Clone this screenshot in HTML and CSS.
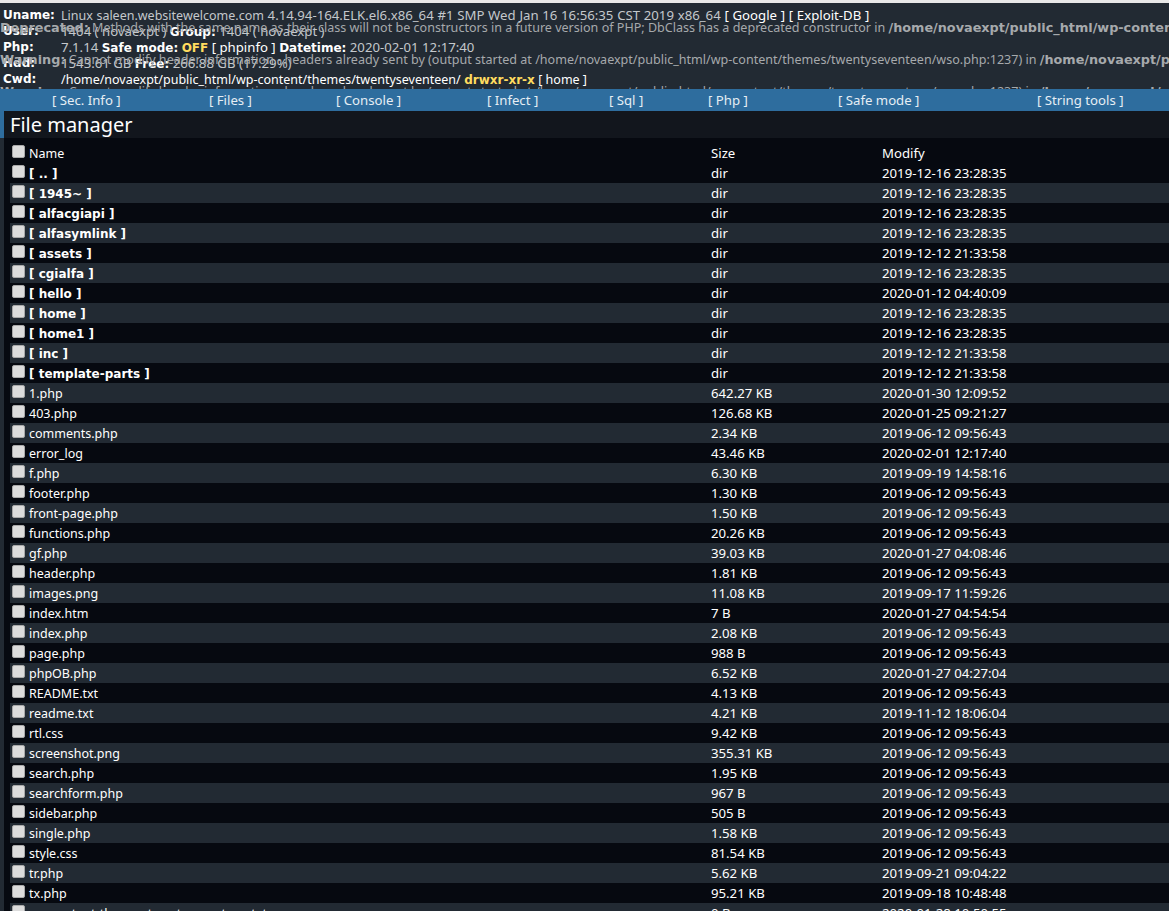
FILE: index.html
```html
<!DOCTYPE html>
<html lang="en">
<head>
<meta charset="utf-8">
<title>File manager</title>
<link rel="stylesheet" href="styles.css">
</head>
<body>
<div class="page">
<header class="head">
  <div class="info-row"><b class="label">Uname:</b><span class="val uname"><span class="txt">Linux saleen.websitewelcome.com</span> 4.14.94-164.ELK.el6.x86_64 #1 SMP Wed Jan 16 16:56:35 CST 2019 x86_64 <a>[ Google ]</a> <a>[ Exploit-DB ]</a></span></div>
  <div class="info-row"><b class="label">User:</b><span class="val">1404 ( novaexpt ) <b>Group:</b> 1404 ( novaexpt )</span></div>
  <div class="info-row"><b class="label">Php:</b><span class="val">7.1.14 <b>Safe mode:</b> <b class="warn">OFF</b> <a>[ phpinfo ]</a> <b>Datetime:</b> 2020-02-01 12:17:40</span></div>
  <div class="info-row"><b class="label">Hdd:</b><span class="val">1543.61 GB <b>Free:</b> 266.88 GB (17.29%)</span></div>
  <div class="info-row"><b class="label">Cwd:</b><span class="val"><a class="txt">/home/novaexpt/public_html/wp-content/themes/twentyseventeen/</a> <b class="warn">drwxr-xr-x</b> <a class="txt">[ home ]</a></span></div>
  <div class="notices">
    <div class="notice n1"><b>Deprecated:</b> Methods with the same name as their class will not be constructors in a future version of PHP; DbClass has a deprecated constructor in <b>/home/novaexpt/public_html/wp-content/themes/twentyseventeen/wso.php</b></div>
    <div class="notice n2"><b>Warning:</b> Cannot modify header information - headers already sent by (output started at /home/novaexpt/public_html/wp-content/themes/twentyseventeen/wso.php:1237) in <b>/home/novaexpt/public_html/wp-content/themes</b></div>
    <div class="notice n3"><b>Warning:</b> Cannot modify header information - headers already sent by (output started at /home/novaexpt/public_html/wp-content/themes/twentyseventeen/wso.php:1237) in <b>/home/novaexpt/public_html/wp-content/themes</b></div>
  </div>
</header>
<nav class="menu">
  <a>[ Sec. Info ]</a><a>[ Files ]</a><a>[ Console ]</a><a>[ Infect ]</a><a>[ Sql ]</a><a>[ Php ]</a><a>[ Safe mode ]</a><a>[ String tools ]</a>
</nav>
<main class="main">
  <h1 class="title">File manager</h1>
  <div class="files">
    <div class="row head-row"><span class="name"><i class="cb"></i>Name</span><span class="size">Size</span><span class="mod">Modify</span></div>
    <div class="row dir"><span class="name"><i class="cb"></i><b>[ .. ]</b></span><span class="size">dir</span><span class="mod">2019-12-16 23:28:35</span></div>
    <div class="row alt dir"><span class="name"><i class="cb"></i><b>[ 1945~ ]</b></span><span class="size">dir</span><span class="mod">2019-12-16 23:28:35</span></div>
    <div class="row dir"><span class="name"><i class="cb"></i><b>[ alfacgiapi ]</b></span><span class="size">dir</span><span class="mod">2019-12-16 23:28:35</span></div>
    <div class="row alt dir"><span class="name"><i class="cb"></i><b>[ alfasymlink ]</b></span><span class="size">dir</span><span class="mod">2019-12-16 23:28:35</span></div>
    <div class="row dir"><span class="name"><i class="cb"></i><b>[ assets ]</b></span><span class="size">dir</span><span class="mod">2019-12-12 21:33:58</span></div>
    <div class="row alt dir"><span class="name"><i class="cb"></i><b>[ cgialfa ]</b></span><span class="size">dir</span><span class="mod">2019-12-16 23:28:35</span></div>
    <div class="row dir"><span class="name"><i class="cb"></i><b>[ hello ]</b></span><span class="size">dir</span><span class="mod">2020-01-12 04:40:09</span></div>
    <div class="row alt dir"><span class="name"><i class="cb"></i><b>[ home ]</b></span><span class="size">dir</span><span class="mod">2019-12-16 23:28:35</span></div>
    <div class="row dir"><span class="name"><i class="cb"></i><b>[ home1 ]</b></span><span class="size">dir</span><span class="mod">2019-12-16 23:28:35</span></div>
    <div class="row alt dir"><span class="name"><i class="cb"></i><b>[ inc ]</b></span><span class="size">dir</span><span class="mod">2019-12-12 21:33:58</span></div>
    <div class="row dir"><span class="name"><i class="cb"></i><b>[ template-parts ]</b></span><span class="size">dir</span><span class="mod">2019-12-12 21:33:58</span></div>
    <div class="row alt"><span class="name"><i class="cb"></i>1.php</span><span class="size">642.27 KB</span><span class="mod">2020-01-30 12:09:52</span></div>
    <div class="row"><span class="name"><i class="cb"></i>403.php</span><span class="size">126.68 KB</span><span class="mod">2020-01-25 09:21:27</span></div>
    <div class="row alt"><span class="name"><i class="cb"></i>comments.php</span><span class="size">2.34 KB</span><span class="mod">2019-06-12 09:56:43</span></div>
    <div class="row"><span class="name"><i class="cb"></i>error_log</span><span class="size">43.46 KB</span><span class="mod">2020-02-01 12:17:40</span></div>
    <div class="row alt"><span class="name"><i class="cb"></i>f.php</span><span class="size">6.30 KB</span><span class="mod">2019-09-19 14:58:16</span></div>
    <div class="row"><span class="name"><i class="cb"></i>footer.php</span><span class="size">1.30 KB</span><span class="mod">2019-06-12 09:56:43</span></div>
    <div class="row alt"><span class="name"><i class="cb"></i>front-page.php</span><span class="size">1.50 KB</span><span class="mod">2019-06-12 09:56:43</span></div>
    <div class="row"><span class="name"><i class="cb"></i>functions.php</span><span class="size">20.26 KB</span><span class="mod">2019-06-12 09:56:43</span></div>
    <div class="row alt"><span class="name"><i class="cb"></i>gf.php</span><span class="size">39.03 KB</span><span class="mod">2020-01-27 04:08:46</span></div>
    <div class="row"><span class="name"><i class="cb"></i>header.php</span><span class="size">1.81 KB</span><span class="mod">2019-06-12 09:56:43</span></div>
    <div class="row alt"><span class="name"><i class="cb"></i>images.png</span><span class="size">11.08 KB</span><span class="mod">2019-09-17 11:59:26</span></div>
    <div class="row"><span class="name"><i class="cb"></i>index.htm</span><span class="size">7 B</span><span class="mod">2020-01-27 04:54:54</span></div>
    <div class="row alt"><span class="name"><i class="cb"></i>index.php</span><span class="size">2.08 KB</span><span class="mod">2019-06-12 09:56:43</span></div>
    <div class="row"><span class="name"><i class="cb"></i>page.php</span><span class="size">988 B</span><span class="mod">2019-06-12 09:56:43</span></div>
    <div class="row alt"><span class="name"><i class="cb"></i>phpOB.php</span><span class="size">6.52 KB</span><span class="mod">2020-01-27 04:27:04</span></div>
    <div class="row"><span class="name"><i class="cb"></i>README.txt</span><span class="size">4.13 KB</span><span class="mod">2019-06-12 09:56:43</span></div>
    <div class="row alt"><span class="name"><i class="cb"></i>readme.txt</span><span class="size">4.21 KB</span><span class="mod">2019-11-12 18:06:04</span></div>
    <div class="row"><span class="name"><i class="cb"></i>rtl.css</span><span class="size">9.42 KB</span><span class="mod">2019-06-12 09:56:43</span></div>
    <div class="row alt"><span class="name"><i class="cb"></i>screenshot.png</span><span class="size">355.31 KB</span><span class="mod">2019-06-12 09:56:43</span></div>
    <div class="row"><span class="name"><i class="cb"></i>search.php</span><span class="size">1.95 KB</span><span class="mod">2019-06-12 09:56:43</span></div>
    <div class="row alt"><span class="name"><i class="cb"></i>searchform.php</span><span class="size">967 B</span><span class="mod">2019-06-12 09:56:43</span></div>
    <div class="row"><span class="name"><i class="cb"></i>sidebar.php</span><span class="size">505 B</span><span class="mod">2019-06-12 09:56:43</span></div>
    <div class="row alt"><span class="name"><i class="cb"></i>single.php</span><span class="size">1.58 KB</span><span class="mod">2019-06-12 09:56:43</span></div>
    <div class="row"><span class="name"><i class="cb"></i>style.css</span><span class="size">81.54 KB</span><span class="mod">2019-06-12 09:56:43</span></div>
    <div class="row alt"><span class="name"><i class="cb"></i>tr.php</span><span class="size">5.62 KB</span><span class="mod">2019-09-21 09:04:22</span></div>
    <div class="row"><span class="name"><i class="cb"></i>tx.php</span><span class="size">95.21 KB</span><span class="mod">2019-09-18 10:48:48</span></div>
    <div class="row alt"><span class="name"><i class="cb"></i>wp-content-themes-twentyseventeen.txt</span><span class="size">0 B</span><span class="mod">2020-01-28 10:50:55</span></div>
  </div>
</main>
</div>
</body>
</html>
```
FILE: styles.css
```css
html, body { margin: 0; padding: 0; height: 911px; overflow: hidden; background: #060910; }
body { font-family: "Noto Sans", "DejaVu Sans", sans-serif; font-size: 13.2px; color: #fff; }
b { font-family: "DejaVu Sans", sans-serif; font-size: 12px; }
.page { border-top: 3px solid #e8e8e8; }
.head { position: relative; height: 86px; overflow: hidden; background: #222a33; padding: 4px 3px 0; box-sizing: border-box; }
.info-row { display: flex; height: 16px; line-height: 16px; white-space: nowrap; }
.label { width: 58px; color: #fff; flex: none; }
.val { color: #c4c8cc; }
.val b { color: #fff; }
.val a { color: #fff; }
.val .warn { color: #ffdb5f; }
.uname { word-spacing: 0.3px; }
.txt { font-size: 12.5px; }
.notices { position: absolute; inset: 0; color: #a6a9ac; white-space: nowrap; font-size: 12.55px; }
.notice { position: absolute; left: 0; line-height: 16px; }
.notice b { font-size: 12.8px; }
.n1 { top: 17px; }
.n2 { top: 49px; }
.n3 { top: 81px; }
.menu { display: grid; grid-template-columns: 157px 127px 151px 122px 99px 130px 199px 132px; height: 22px; line-height: 23px; background: #2e6d9e; padding-left: 52px; white-space: nowrap; }
.menu a { color: #e6eef4; }
.title { margin: 0; height: 27px; line-height: 28px; background: #12161d; border-left: 4px solid #2e6d9e; padding-left: 6px; font-size: 20px; font-weight: 400; }
.files { border-left: 4px solid #222a33; padding: 5px 0 0 6px; }
.row { display: flex; align-items: center; height: 20px; white-space: nowrap; }
.alt { background: #222a33; }
.name { display: flex; align-items: center; width: 701px; padding-left: 2px; box-sizing: border-box; font-size: 12.5px; }
.name b { padding-top: 2px; }
.size { width: 171px; }
.cb { width: 11px; height: 11px; margin: -4px 4px 0 0; background: #dcdcdc; border: 1px solid #a8a8a8; border-radius: 2px; flex: none; }
```
